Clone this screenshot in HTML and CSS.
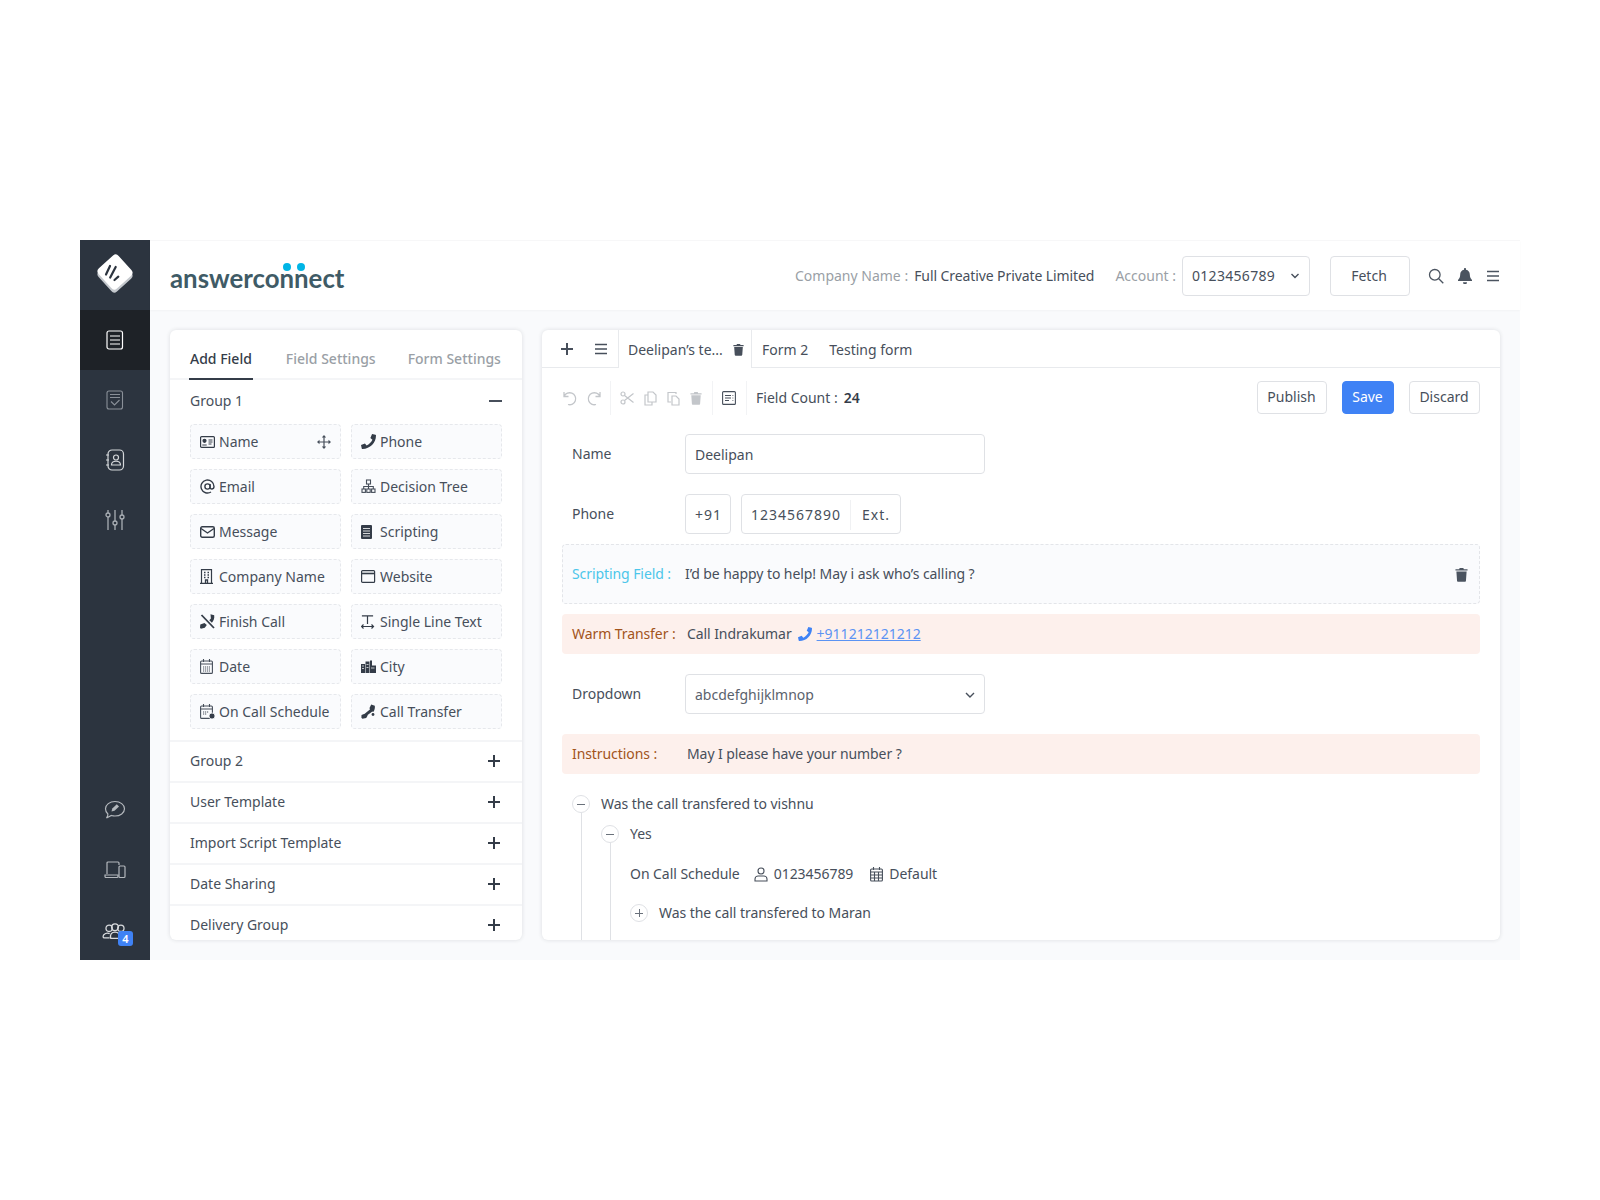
FILE: index.html
```html
<!DOCTYPE html>
<html lang="en">
<head>
<meta charset="utf-8">
<title>answerconnect form builder</title>
<link rel="stylesheet" href="styles.css">
</head>
<body>
<svg class="defs" width="0" height="0" aria-hidden="true">
  <symbol id="trash" viewBox="0 0 14 16"><path fill="currentColor" d="M.5 2.4h4L5 1h4l.5 1.400h4v1.400H.5zM1.500 4.800h11l-.7 10a1 1 0 0 1-1 1H3.200a1 1 0 0 1-1-1z"/></symbol>
  <symbol id="phone" viewBox="0 0 16 16"><path fill="currentColor" d="M15.400.9 11.800.1 10 4.300l2.200 1.800c-1.100 2.400-3.600 4.900-6.200 6.200L4.200 10 0 11.800l.8 3.600c.1.400.5.600.9.600C9.600 16 16 9.600 16 1.700c0-.4-.2-.7-.6-.8z"/></symbol>
</svg>
<div class="app">
  <aside class="rail-nav">
    <div class="brand">
      <svg width="40" height="42" viewBox="0 0 40 42"><rect x="6.500" y="8.500" width="27" height="27" rx="4" transform="rotate(48 20 22)" fill="#c4c8cd"/><rect x="6.500" y="5.500" width="27" height="27" rx="4" transform="rotate(48 20 19)" fill="#fff"/><path d="M11 21.500l4-8.500M15.200 24.500l5.500-10.500M19.500 27l3.800-3.300" stroke="#2c343f" stroke-width="2.200" stroke-linecap="round"/></svg>
    </div>
    <div class="nav-item active">
      <svg width="18" height="20" viewBox="0 0 18 20" fill="none" stroke="#fff" stroke-width="1.200"><rect x="1" y="1" width="15.500" height="18" rx="2"/><path d="M4 6h10M4 10h10M4 14h10"/></svg>
    </div>
    <div class="nav-item">
      <svg width="18" height="20" viewBox="0 0 18 20" fill="none" stroke="#8a9098" stroke-width="1.100"><rect x="1" y="1" width="15.500" height="18" rx="2"/><path d="M4 4.500h10M4 7.500h10M5 11.500l3.500 3.500 5-5"/></svg>
    </div>
    <div class="nav-item">
      <svg width="20" height="22" viewBox="0 0 20 22" fill="none" stroke="#d4d7da" stroke-width="1.200"><rect x="3" y="1" width="15.500" height="20" rx="4"/><path d="M1 6h3M1 11h3M1 16h3"/><circle cx="11" cy="8.500" r="2.500"/><path d="M6.500 16c0-5 9-5 9 0z"/></svg>
    </div>
    <div class="nav-item">
      <svg width="20" height="22" viewBox="0 0 20 22" fill="none" stroke="#a9aeb4" stroke-width="1.300"><path d="M3 1v20M10 1v20M17 1v20"/><circle cx="3" cy="6" r="2" fill="#2c343f"/><circle cx="10" cy="14" r="2" fill="#2c343f"/><circle cx="17" cy="8" r="2" fill="#2c343f"/></svg>
    </div>
    <div class="nav-spacer"></div>
    <div class="nav-item">
      <svg width="22" height="20" viewBox="0 0 22 20" fill="none" stroke="#b4b8bd" stroke-width="1.200"><path d="M11 1.500c5.300 0 9.500 3.200 9.500 7.300S16.300 16 11 16c-1.300 0-2.500-.2-3.600-.5L2.500 18c1-1.300 1.500-2.600 1.400-4C2.300 12.700 1.500 10.900 1.500 8.800 1.500 4.700 5.700 1.500 11 1.500z"/><path d="M7.500 11.500l.8-3 4.500-4.300 2.200 2.200-4.500 4.300z" fill="#b4b8bd" stroke="none"/></svg>
    </div>
    <div class="nav-item">
      <svg width="22" height="18" viewBox="0 0 22 18" fill="none" stroke="#b4b8bd" stroke-width="1.200"><path d="M3 13V2a1 1 0 0 1 1-1h10a1 1 0 0 1 1 1v2M1 14h13v1.500a1 1 0 0 1-1 1H2a1 1 0 0 1-1-1z"/><rect x="15" y="5" width="6" height="11.500" rx="1"/></svg>
    </div>
    <div class="nav-item nav-team">
      <svg width="26" height="17" viewBox="0 0 24 16" fill="none" stroke="#d8dadd" stroke-width="1.200"><circle cx="6.500" cy="5" r="3"/><circle cx="12" cy="4" r="3.200"/><circle cx="17.500" cy="5" r="3"/><path d="M7 14H2c-1.500 0-1.500-1.500-.5-3C3 9.500 5 9 7 10M8 14.500c-1-4 1-6 4-6s5 2 4 6z"/></svg>
      <span class="badge">4</span>
    </div>
  </aside>

  <div class="workspace">
    <header class="topbar">
      <div class="logo"><span class="logo-dots"><i></i><i></i></span>answerconnect</div>
      <div class="top-info">
        <span class="muted tight">Company Name :</span>
        <span class="company">Full Creative Private Limited</span>
        <span class="muted account-label">Account :</span>
        <div class="select account"><span>0123456789</span>
          <svg width="10" height="6" viewBox="0 0 10 6" fill="none" stroke="#474f5b" stroke-width="1.400"><path d="M1.500 1l3.500 3.500L8.500 1"/></svg>
        </div>
        <button class="btn fetch">Fetch</button>
        <div class="top-icons">
          <svg width="16" height="16" viewBox="0 0 16 16" fill="none" stroke="#4b5460" stroke-width="1.300"><circle cx="6.800" cy="6.800" r="5.300"/><path d="M10.800 10.800l4.500 4.500"/></svg>
          <svg width="14" height="16" viewBox="0 0 14 16"><path fill="#4b5460" d="M7 0c.6 0 1 .4 1 1v.7c2.400.5 3.800 2.400 3.800 4.800 0 3.300 1.200 4.300 2.200 5.500v1H0v-1c1-1.200 2.200-2.200 2.200-5.500 0-2.400 1.400-4.300 3.800-4.800V1c0-.6.400-1 1-1zM5 14.200h4a2 2 0 0 1-4 0z"/></svg>
          <svg width="14" height="12" viewBox="0 0 14 12" fill="none" stroke="#4b5460" stroke-width="1.400"><path d="M1 1.500h12M1 6h12M1 10.500h12"/></svg>
        </div>
      </div>
    </header>

    <main class="main">
      <section class="card palette">
        <nav class="palette-tabs">
          <span class="ptab on">Add Field</span>
          <span class="ptab">Field Settings</span>
          <span class="ptab form-set">Form Settings</span>
        </nav>
        <div class="group open">
          <div class="group-head first"><span>Group 1</span><span class="minus"></span></div>
          <div class="fields">
            <div class="field"><svg class="fi" width="15" height="12" viewBox="0 0 15 12" fill="none" stroke="#343c48" stroke-width="1.200"><rect x=".6" y=".6" width="13.800" height="10.800" rx="1"/><circle cx="4.500" cy="4.800" r="1.500" fill="#343c48"/><path d="M2.300 9h4.400M8.500 4h4M8.500 6h4M8.500 8h3"/></svg><span>Name</span>
              <svg class="drag" width="14" height="14" viewBox="0 0 14 14" fill="#474f5b"><path d="M7 0l2.200 2.500H4.800zM7 14l-2.200-2.500h4.400zM0 7l2.500-2.200v4.400zM14 7l-2.500 2.200V4.800z"/><path d="M6.400 2h1.200v10H6.400zM2 6.400h10v1.200H2z"/></svg></div>
            <div class="field"><svg class="fi" width="15" height="15"><use href="#phone"/></svg><span>Phone</span></div>
            <div class="field"><svg class="fi" width="15" height="15" viewBox="0 0 15 15" fill="none" stroke="#343c48" stroke-width="1.400"><circle cx="7.500" cy="7.500" r="2.600"/><path d="M10.100 4.900v3.700c0 2 3.900 2 3.900-1.100A6.500 6.500 0 1 0 11 13"/></svg><span>Email</span></div>
            <div class="field"><svg class="fi" width="15" height="15" viewBox="0 0 15 15" fill="none" stroke="#474f5b" stroke-width="1.100"><rect x="5.500" y="1" width="4" height="4"/><rect x="1" y="10" width="3.400" height="3.400"/><rect x="5.800" y="10" width="3.400" height="3.400"/><rect x="10.600" y="10" width="3.400" height="3.400"/><path d="M7.500 5v5M2.700 10V7.500h9.600V10"/></svg><span>Decision Tree</span></div>
            <div class="field"><svg class="fi" width="15" height="12" viewBox="0 0 15 12" fill="none" stroke="#343c48" stroke-width="1.400"><rect x=".7" y=".7" width="13.600" height="10.600" rx="1.500"/><path d="M1 2.500l6.500 4.500L14 2.500"/></svg><span>Message</span></div>
            <div class="field"><svg class="fi" width="15" height="14" viewBox="0 0 15 14"><rect x="0" y="0" width="11" height="14" rx="1" fill="#343c48"/><path d="M2 3.500h7M2 6h7M2 8.500h7M2 11h7" stroke="#fff" stroke-width=".8"/></svg><span>Scripting</span></div>
            <div class="field"><svg class="fi" width="15" height="15" viewBox="0 0 15 15" fill="none" stroke="#343c48" stroke-width="1.200"><path d="M1.500 14.500V.7h10v13.800M0 14.400h13"/><path d="M4 3.500h1.500M7.500 3.500H9M4 6h1.500M7.500 6H9M4 8.500h1.500M7.500 8.500H9M5.500 14v-3h2v3" stroke-width="1.300"/></svg><span>Company Name</span></div>
            <div class="field"><svg class="fi" width="15" height="13" viewBox="0 0 15 13" fill="none" stroke="#343c48" stroke-width="1.200"><rect x=".6" y=".6" width="13" height="11.800" rx="1"/><path d="M.6 3.500h13" stroke-width="1.600"/></svg><span>Website</span></div>
            <div class="field"><svg class="fi" width="15" height="15" viewBox="0 0 15 15"><path fill="#343c48" d="M10.500.3l3.700 1c.5 3-.7 5.800-2.300 7.500L9.300 6.300l1.600-1.800zM.3 10.500l4.200-1.600 2.300 2.200-2 2.600-3.900 1.100-.9-1z"/><path d="M1.500 1l12.500 13" stroke="#343c48" stroke-width="1.800"/></svg><span>Finish Call</span></div>
            <div class="field"><svg class="fi" width="15" height="14" viewBox="0 0 15 14" fill="none" stroke="#343c48" stroke-width="1.200"><path d="M1.500 1.500V.8h10v.7M6.500 1v8M.5 11.500h12M2.500 9.500l-2 2 2 2M10.500 9.500l2 2-2 2"/></svg><span>Single Line Text</span></div>
            <div class="field"><svg class="fi" width="15" height="15" viewBox="0 0 15 15" fill="none" stroke="#474f5b" stroke-width="1.100"><rect x=".6" y="2" width="11.800" height="12.400" rx="1"/><path d="M.6 5h11.800M3.500 0v3M9.500 0v3" /><path d="M3 8h7M3 10h7M3 12h7" stroke-dasharray="1.200 .8"/></svg><span>Date</span></div>
            <div class="field"><svg class="fi" width="15" height="13" viewBox="0 0 15 13" fill="#343c48"><path d="M0 4h4v9H0zM4.500 1.500h4V13h-4zM9 .5h2v5h4v7.500H9z"/><path d="M1 6h2M1 8.500h2M5.500 4.500h2M5.500 7.500h2M10 8h3.500" stroke="#fff" stroke-width=".7"/></svg><span>City</span></div>
            <div class="field"><svg class="fi" width="15" height="15" viewBox="0 0 15 15" fill="none" stroke="#474f5b" stroke-width="1.100"><rect x=".6" y="2" width="11.800" height="12.400" rx="1"/><path d="M.6 5h11.800M3.500 0v3M9.500 0v3"/><path d="M3 8h5.500M3 10h4" stroke-dasharray="1.200 .8"/><circle cx="12" cy="12" r="3" fill="#343c48" stroke="#fafbfd" stroke-width=".8"/></svg><span>On Call Schedule</span></div>
            <div class="field"><svg class="fi" width="15" height="15" viewBox="0 0 15 15" fill="#343c48"><path d="M10.200.5l3.600 1.200c.4 1.700-.2 4.600-1.600 6.400L9.300 6.500 8.500 4zM.5 11l3.800-1.500 2.400 1.900-1.500 2.500-3.800.8-1-.9z"/><path d="M4 9.500l5.500-4.500 1.800 2.500-6 4.500z"/><circle cx="12" cy="10.500" r="1.400"/></svg><span>Call Transfer</span></div>
          </div>
        </div>
        <div class="group-head"><span>Group 2</span><span class="plus"></span></div>
        <div class="group-head"><span>User Template</span><span class="plus"></span></div>
        <div class="group-head"><span>Import Script Template</span><span class="plus"></span></div>
        <div class="group-head"><span>Date Sharing</span><span class="plus"></span></div>
        <div class="group-head"><span>Delivery Group</span><span class="plus"></span></div>
      </section>

      <section class="card editor">
        <div class="form-tabs">
          <span class="tab-tool"><span class="plus"></span></span>
          <span class="tab-tool"><svg width="14" height="12" viewBox="0 0 14 12" fill="none" stroke="#474f5b" stroke-width="1.500"><path d="M1 1.500h12M1 6h12M1 10.500h12"/></svg></span>
          <div class="ftab active"><span>Deelipan’s te...</span><svg class="tab-trash" width="11" height="13"><use href="#trash"/></svg></div>
          <div class="ftab">Form 2</div>
          <div class="ftab last">Testing form</div>
        </div>
        <div class="editor-body">
          <div class="toolbar">
            <div class="tool-group">
              <svg width="16" height="15" viewBox="0 0 16 15" fill="none" stroke="#c3c6ca" stroke-width="1.300"><path d="M2 1v4.500h4.500M2.200 5.300A6 6 0 1 1 6 13.500"/></svg>
              <svg width="16" height="15" viewBox="0 0 16 15" fill="none" stroke="#c3c6ca" stroke-width="1.300"><path d="M14 1v4.500H9.500M13.800 5.300A6 6 0 1 0 10 13.500"/></svg>
            </div>
            <div class="tool-group">
              <svg width="14" height="14" viewBox="0 0 14 14" fill="none" stroke="#c3c6ca" stroke-width="1.200"><circle cx="3" cy="3" r="2"/><circle cx="3" cy="11" r="2"/><path d="M4.500 4.500l9 7M4.500 9.500l9-7"/></svg>
              <svg width="13" height="15" viewBox="0 0 13 15" fill="none" stroke="#c3c6ca" stroke-width="1.200"><path d="M4 1h5l3 3v7H4zM4 4H1v10h7v-3"/></svg>
              <svg width="13" height="15" viewBox="0 0 13 15" fill="none" stroke="#c3c6ca" stroke-width="1.200"><path d="M9 3V1.500H1V11h3"/><path d="M5 5h4l3 3v6H5z"/></svg>
              <svg class="pale" width="12" height="14"><use href="#trash"/></svg>
            </div>
            <div class="tool-group">
              <svg width="14" height="14" viewBox="0 0 14 14" fill="none" stroke="#474f5b" stroke-width="1.100"><rect x=".6" y=".6" width="12.800" height="12.800" rx="1"/><path d="M3 4.500h6M3 7h6M3 9.500h4M10.500 4.500h.8M10.500 7h.8M10.500 9.500h.8"/></svg>
            </div>
            <div class="count"><span>Field Count :</span><b>24</b></div>
            <div class="actions">
              <button class="btn small pub">Publish</button>
              <button class="btn small primary">Save</button>
              <button class="btn small dis">Discard</button>
            </div>
          </div>

          <div class="form-row">
            <label>Name</label>
            <div class="input wide">Deelipan</div>
          </div>
          <div class="form-row phone-row">
            <label>Phone</label>
            <div class="input code">+91</div>
            <div class="input number"><span class="num">1234567890</span><span class="ext">Ext.</span></div>
          </div>
          <div class="note script">
            <span class="note-label cyan">Scripting Field :</span>
            <span>I’d be happy to help! May i ask who’s calling ?</span>
            <svg class="note-trash" width="13" height="15"><use href="#trash"/></svg>
          </div>
          <div class="note warm">
            <span class="note-label">Warm Transfer :</span>
            <span>Call Indrakumar</span>
            <svg class="blue-phone" width="14" height="14"><use href="#phone"/></svg>
            <a href="#">+911212121212</a>
          </div>
          <div class="form-row drop-row">
            <label>Dropdown</label>
            <div class="input wide select-like"><span>abcdefghijklmnop</span>
              <svg width="10" height="6" viewBox="0 0 10 6" fill="none" stroke="#474f5b" stroke-width="1.400"><path d="M1 1l4 4 4-4"/></svg>
            </div>
          </div>
          <div class="note warm instr">
            <span class="note-label">Instructions :</span>
            <span>May I please have your number ?</span>
          </div>

          <div class="tree">
            <div class="node">
              <div class="rail"><span class="circle"><i class="m"></i></span><span class="line"></span></div>
              <div class="node-body">
                <div class="node-title">Was the call transfered to vishnu</div>
                <div class="node sub">
                  <div class="rail"><span class="circle"><i class="m"></i></span><span class="line"></span></div>
                  <div class="node-body">
                    <div class="node-title">Yes</div>
                    <div class="sched">
                      <span>On Call Schedule</span>
                      <span class="sched-item"><svg width="14" height="15" viewBox="0 0 14 15" fill="none" stroke="#474f5b" stroke-width="1.100"><circle cx="7" cy="4" r="3"/><path d="M1 14v-2c0-2 2-3 3-3h6c1 0 3 1 3 3v2z"/></svg>0123456789</span>
                      <span class="sched-item sched-cal"><svg width="13" height="15" viewBox="0 0 13 15" fill="none" stroke="#474f5b" stroke-width="1.100"><rect x=".6" y="2" width="11.800" height="12" rx="1"/><path d="M.6 5h11.800M3.500 0v3M9.500 0v3M.6 8h11.800M.6 11h11.800M4.500 5v9M8.500 5v9"/></svg>Default</span>
                    </div>
                    <div class="collapsed"><span class="circle"><i class="m"></i><i class="v"></i></span><span>Was the call transfered to Maran</span></div>
                  </div>
                </div>
              </div>
            </div>
          </div>
        </div>
      </section>
    </main>
  </div>
</div>
</body>
</html>
```
FILE: styles.css
```css
* { box-sizing: border-box; }
html, body { margin: 0; padding: 0; background: #fff; }
body {
  height: 1200px;
  display: flex;
  align-items: center;
  justify-content: center;
  font-family: "Noto Sans", "Open Sans", sans-serif;
  font-size: 14px;
  line-height: 20px;
  color: #474f5b;
}
.defs { position: absolute; }
.app { width: 1440px; height: 720px; display: flex; background: #f9fafc; }

.rail-nav { width: 70px; background: #2c343f; display: flex; flex-direction: column; flex: none; }
.brand { height: 70px; display: flex; align-items: center; justify-content: center; padding-bottom: 2px; }
.nav-item { height: 60px; display: flex; align-items: center; justify-content: center; position: relative; padding-bottom: 1px; }
.nav-item.active { background: #1e2227; }
.nav-spacer { flex: 1; }
.nav-team { padding-bottom: 0; padding-top: 2px; }
.badge {
  position: absolute; left: 38px; top: 31px; width: 15px; height: 15px;
  background: #3f82f5; color: #fff; border-radius: 3px;
  font-size: 11px; line-height: 15px; text-align: center; font-weight: 600;
}

.workspace { flex: 1; display: flex; flex-direction: column; min-width: 0; }
.topbar {
  height: 70px; flex: none; background: #fff; border-top: 1px solid #f7f7f8;
  display: flex; align-items: center; justify-content: space-between;
  padding: 0 20px;
  box-shadow: 0 1px 2px rgba(0,0,0,.03);
}
.logo {
  position: relative; font-family: "Lato", sans-serif; font-weight: 700; font-size: 25.800px;
  color: #3f5b66; line-height: 30px; margin-top: 4px;
}
.logo-dots { position: absolute; left: 113px; top: 0; display: flex; gap: 6px; }
.logo-dots i { width: 8px; height: 8px; border-radius: 50%; background: #00b5e6; display: block; }
.top-info { display: flex; align-items: center; }
.muted { color: #9a9fa6; }
.tight { margin-right: 6px; }
.company { color: #474f5b; margin-right: 21px; letter-spacing: -.09px; }
.account-label { margin-right: 6px; }
.select, .btn, .input { border: 1px solid #dfe1e5; border-radius: 4px; background: #fff; color: #474f5b; font: inherit; }
.account { width: 128px; height: 40px; display: flex; align-items: center; justify-content: space-between; padding: 0 9px; letter-spacing: .3px; }
.fetch { width: 80px; height: 40px; margin-left: 20px; padding: 0 2px 0 0; }
.top-icons { display: flex; align-items: center; gap: 14px; margin-left: 18px; }

.main { flex: 1; display: flex; gap: 20px; padding: 20px; min-height: 0; }
.card { background: #fff; border-radius: 6px; box-shadow: 0 0 4px rgba(40,50,60,.14); overflow: hidden; }
.palette { width: 352px; flex: none; }
.editor { flex: 1; display: flex; flex-direction: column; min-width: 0; }

.palette-tabs { height: 50px; display: flex; gap: 34px; padding: 0 20px; border-bottom: 2px solid #f4f5f7; white-space: nowrap; }
.ptab { color: #9a9fa6; line-height: 20px; padding-top: 19px; height: 50px; font-weight: 500; }
.ptab.on { color: #343c48; border-bottom: 2px solid #343c48; margin: 0 -1px; padding-left: 1px; padding-right: 1px; }
.form-set { margin-left: -2px; }

.group-head {
  height: 41px; display: flex; align-items: center; justify-content: space-between;
  padding: 0 22px 2px 20px; border-top: 2px solid #f4f5f7;
}
.group-head.first { border-top: 0; height: 44px; padding-right: 20px; padding-bottom: 3px; }
.minus { width: 13px; height: 2px; background: #474f5b; display: block; }
.plus { width: 12px; height: 12px; display: block; position: relative; }
.plus::before, .plus::after { content: ""; position: absolute; background: #343c48; }
.plus::before { left: 0; right: 0; top: 5px; height: 2px; }
.plus::after { top: 0; bottom: 0; left: 5px; width: 2px; }

.fields { display: grid; grid-template-columns: 151px 151px; gap: 10px; padding: 0 20px 11px; }
.field {
  height: 35px; background: #fafbfd; border: 1px dashed #e6e8ec; border-radius: 4px;
  display: flex; align-items: center; padding-left: 9px; position: relative;
}
.fi { width: 15px; margin-right: 4px; flex: none; color: #343c48; }
.drag { position: absolute; right: 9px; top: 10px; }

.form-tabs { height: 38px; flex: none; display: flex; align-items: stretch; border-bottom: 1px solid #e8eaed; padding-left: 19px; }
.tab-tool { width: 33px; display: flex; align-items: center; }
.form-tabs .tab-tool:nth-child(2) { width: 24px; }
.form-tabs .tab-tool .plus::before, .form-tabs .tab-tool .plus::after { background: #474f5b; }
.ftab { display: flex; align-items: center; padding: 2px 10px 0; position: relative; }
.ftab.last { margin-left: 1px; }
.ftab.active {
  width: 134px; margin-bottom: -1px; background: #fff;
  border: 1px solid #e8eaed; border-top: 0; border-bottom: 0; justify-content: space-between; padding: 2px 7px 0 9px;
}
.tab-trash { color: #474f5b; margin-top: -2px; }

.editor-body { flex: 1; min-height: 0; padding: 0 20px; display: flex; flex-direction: column; }
.toolbar { height: 66px; flex: none; display: flex; align-items: center; padding-bottom: 6px; }
.tool-group { display: flex; align-items: center; gap: 10px; height: 34px; padding: 0 10px 0 0; border-right: 1px solid #f2f3f5; margin-right: 9px; }
.tool-group:first-child { gap: 8px; padding-right: 8px; }
.tool-group svg { display: block; }
.pale { color: #c3c6ca; }
.count { display: flex; gap: 6px; }
.count b { font-weight: 600; color: #343c48; }
.actions { margin-left: auto; display: flex; gap: 15px; margin-top: -1px; }
.btn.small { height: 33px; padding: 0 1px 2px 0; width: 52px; }
.btn.pub { width: 70px; }
.btn.dis { width: 71px; }
.btn.primary { background: #3f82f5; border-color: #3f82f5; color: #fff; }

.form-row { display: flex; align-items: center; height: 40px; flex: none; padding-left: 10px; }
.form-row label { width: 113px; flex: none; margin-top: -1px; }
.phone-row { margin-top: 20px; }
.input { height: 40px; display: flex; align-items: center; padding: 1px 9px 0; }
.wide { width: 300px; }
.code { width: 46px; letter-spacing: 1px; }
.number { width: 160px; margin-left: 10px; letter-spacing: 1px; padding-right: 0; }
.num { width: 100px; border-right: 1px solid #f0f1f3; line-height: 30px; }
.ext { padding-left: 11px; }

.note { flex: none; display: flex; align-items: center; padding: 0 10px; border-radius: 4px; letter-spacing: -.08px; }
.note-label { width: 113px; flex: none; }
.script { height: 60px; margin-top: 10px; background: #fafbfd; border: 1px dashed #e3e5e9; padding-left: 9px; }
.cyan { color: #4cc6ea; }
.note-trash { margin-left: auto; margin-right: 1px; color: #4b5460; }
.warm { height: 40px; margin-top: 10px; background: #fdf0ec; }
.warm .note-label { color: #a2541b; width: 115px; }
.blue-phone { color: #3f82f5; margin: 0 5px 0 6px; }
.warm a { color: #5b93f3; letter-spacing: 0; }
.drop-row { margin-top: 20px; }
.select-like { justify-content: space-between; color: #5a626d; padding-right: 9px; }
.instr { margin-top: 20px; }

.tree { flex: 1; min-height: 0; margin-top: 21px; padding-left: 10px; overflow: hidden; display: flex; letter-spacing: -.05px; }
.node { display: flex; gap: 11px; flex: 1; }
.rail { width: 18px; flex: none; display: flex; flex-direction: column; align-items: center; }
.line { flex: 1; width: 1px; background: #dfe1e5; }
.circle {
  width: 18px; height: 18px; flex: none; border: 1px solid #dfe1e5; border-radius: 50%; background: #fff; position: relative; display: block;
}
.circle i { position: absolute; background: #6a717b; display: block; }
.circle .m { left: 4px; right: 4px; top: 7.500px; height: 1px; }
.circle .v { top: 4px; bottom: 4px; left: 7.500px; width: 1px; }
.node-body { flex: 1; display: flex; flex-direction: column; min-width: 0; }
.node-title { height: 18px; line-height: 18px; }
.sub { margin-top: 12px; flex: 1; }
.sched { display: flex; align-items: center; height: 20px; margin-top: 21px; }
.sched-item { display: flex; align-items: center; gap: 6px; margin-left: 14px; }
.sched-cal { margin-left: 17px; gap: 6px; }
.collapsed { display: flex; align-items: center; gap: 11px; margin-top: 19px; }
```
